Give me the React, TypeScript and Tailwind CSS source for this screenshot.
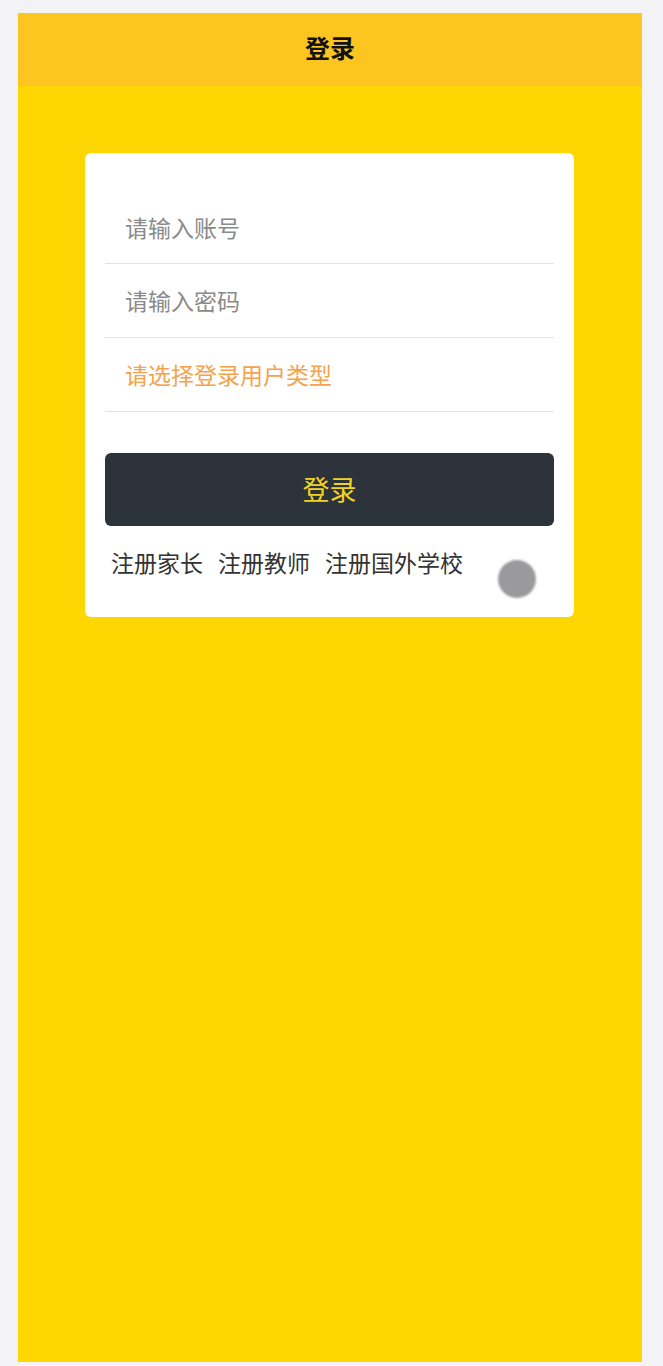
import { useState } from 'react';

const FONT = "font-['Microsoft_YaHei','Noto_Sans_CJK_SC','Noto_Sans',sans-serif]";

export default function App() {
  const [account, setAccount] = useState<string>("");
  const [password, setPassword] = useState<string>("");

  return (
    <div className={`min-h-screen bg-[#f3f3f6] pt-[13px] pl-[18px] pr-[21px] pb-[4px] ${FONT}`}>
      <div className="flex h-[1349px] flex-col">
        {/* title bar */}
        <div className="flex h-[73px] items-center justify-center bg-[#fdc51f] pb-[5px]">
          <span className="text-[25px] font-bold leading-none text-[#111]">登录</span>
        </div>

        <div className="flex-1 bg-[#fed703] pt-[67px] pl-[67px]">
          <div className="relative h-[464px] w-[489px] rounded-[6px] bg-white px-[20px] pt-[38px]">
            <div className="flex h-[73px] items-center border-b border-[#e3e3e6]">
              <input
                value={account}
                onChange={(e) => setAccount(e.target.value)}
                placeholder="请输入账号"
                className="w-full bg-transparent pl-[20px] text-[23px] text-[#333] outline-none placeholder:text-[#8a8a8a]"
              />
            </div>
            <div className="flex h-[74px] items-center border-b border-[#e3e3e6]">
              <input
                type="password"
                value={password}
                onChange={(e) => setPassword(e.target.value)}
                placeholder="请输入密码"
                className="w-full bg-transparent pl-[20px] text-[23px] text-[#333] outline-none placeholder:text-[#8a8a8a]"
              />
            </div>
            <div className="flex h-[74px] items-center border-b border-[#e3e3e6]">
              <span className="pl-[20px] text-[23px] text-[#f6a24c]">请选择登录用户类型</span>
            </div>

            <button className="mt-[41px] flex h-[73px] w-full items-center justify-center rounded-[6px] bg-[#2d333b] text-[27px] text-[#f2d322]">
              登录
            </button>

            <div className="mt-[21px] flex gap-[15px] pl-[6px] text-[23px] leading-[30px] text-[#333]">
              <span>注册家长</span>
              <span>注册教师</span>
              <span>注册国外学校</span>
            </div>

            {/* touch indicator */}
            <div className="absolute left-[413px] top-[407px] h-[38px] w-[38px] rounded-full bg-[#9a9a9c] blur-[1px]" />
          </div>
        </div>
      </div>
    </div>
  );
}
